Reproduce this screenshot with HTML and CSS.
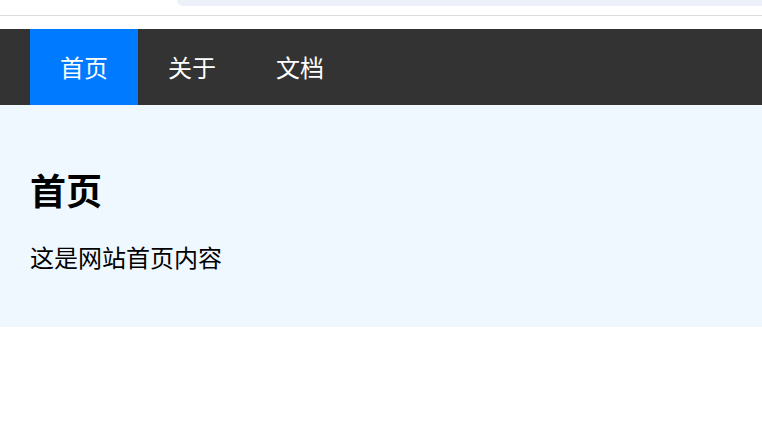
FILE: index.html
```html
<!DOCTYPE html>
<html>
<head>
    <meta charset="UTF-8">
    <meta name="viewport" content="width=device-width, initial-scale=1.0">
    <title>首页</title>
    <link rel="stylesheet" href="styles.css">
</head>
<body>
    <div class="top-strip">
        <div class="search-pill"></div>
    </div>

    <nav class="main-nav">
        <a class="nav-link active" href="#">首页</a>
        <a class="nav-link" href="#">关于</a>
        <a class="nav-link" href="#">文档</a>
    </nav>

    <div class="page-content">
        <h1>首页</h1>
        <p>这是网站首页内容</p>
    </div>
</body>
</html>
```

FILE: styles.css
```css
* {
    margin: 0;
    padding: 0;
    box-sizing: border-box;
}

body {
    font-family: "Noto Sans CJK SC", "Noto Sans", sans-serif;
    background-color: #ffffff;
    color: #000000;
}

.top-strip {
    height: 16px;
    border-bottom: 1px solid #dcdcdc;
    display: flex;
    justify-content: flex-end;
}

.search-pill {
    width: 585px;
    height: 6px;
    background-color: #ebf0f9;
    border-bottom-left-radius: 10px;
}

.main-nav {
    margin-top: 13px;
    display: flex;
    padding-left: 30px;
    background-color: #333333;
}

.nav-link {
    display: block;
    padding: 0 30px;
    font-size: 24px;
    line-height: 76px;
    color: #ffffff;
    text-decoration: none;
}

.nav-link.active {
    background-color: #007bff;
}

.page-content {
    background-color: #f0f8ff;
    padding: 66px 30px 58px;
}

.page-content h1 {
    font-size: 36px;
    line-height: 36px;
    font-weight: bold;
    margin-bottom: 38px;
}

.page-content p {
    font-size: 24px;
    line-height: 24px;
}
```
